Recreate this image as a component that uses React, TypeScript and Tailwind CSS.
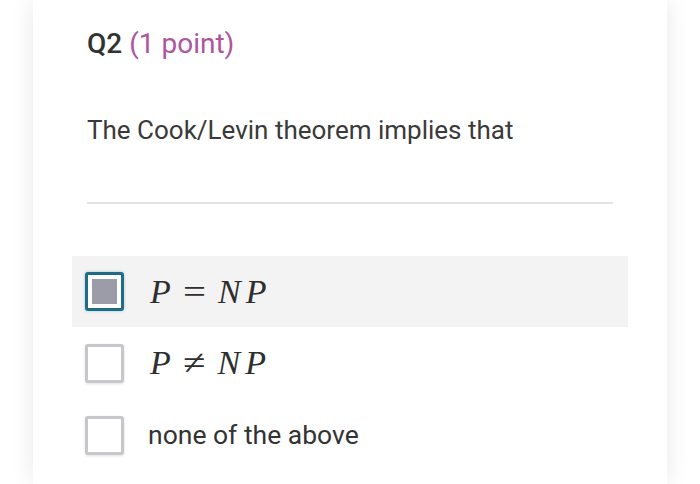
import React from "react";

function Box({ checked }: { checked?: boolean }) {
  if (checked) {
    return (
      <div className="w-[39px] h-[39px] shrink-0 rounded-[3px] border-[3px] border-[#1d6c88] bg-white p-[4px] shadow-[0_0_3px_rgba(29,108,136,0.35)]">
        <div className="w-full h-full bg-[#9b9ca8]" />
      </div>
    );
  }
  return (
    <div className="w-[39px] h-[39px] shrink-0 rounded-[3px] border-[3px] border-[#c6c6cb] bg-white shadow-[0_1px_3px_rgba(0,0,0,0.12)]" />
  );
}

function Math({ op }: { op: string }) {
  return (
    <span className="font-['Liberation_Serif',serif] text-[34px] text-[#2e2e2e] leading-none whitespace-nowrap">
      <i>P</i>
      <span className="inline-block mx-[14px] scale-x-[1.2]">{op}</span>
      <i className="mr-[5px]">N</i>
      <i>P</i>
    </span>
  );
}

export default function App() {
  return (
    <div className="w-[700px] h-[484px] overflow-hidden bg-white">
      <div className="mx-[33px] h-[484px] bg-white shadow-[0_0_22px_rgba(0,0,0,0.09)] px-[54px] pt-[26px] font-['Roboto',sans-serif]">
        <div className="text-[28px] leading-[36px] text-[#333]">
          <span className="font-medium">Q2</span>{" "}
          <span className="text-[#ad569e]">(1 point)</span>
        </div>
        <div className="mt-[50px] text-[26px] leading-[36px] text-[#3a3a3a]">
          The Cook/Levin theorem implies that
        </div>
        <div className="mt-[54px] h-[2px] bg-[#e3e3e6]" />
        <div className="-mx-[15px] mt-[52px] flex flex-col">
          <div className="h-[71px] flex items-center gap-[26px] px-[13px] bg-[#f3f3f3]">
            <Box checked />
            <Math op="=" />
          </div>
          <div className="h-[72px] flex items-center gap-[26px] px-[13px]">
            <Box />
            <Math op="≠" />
          </div>
          <div className="h-[72px] flex items-center gap-[24px] px-[13px]">
            <Box />
            <span className="text-[26.5px] text-[#333] leading-none">none of the above</span>
          </div>
        </div>
      </div>
    </div>
  );
}
